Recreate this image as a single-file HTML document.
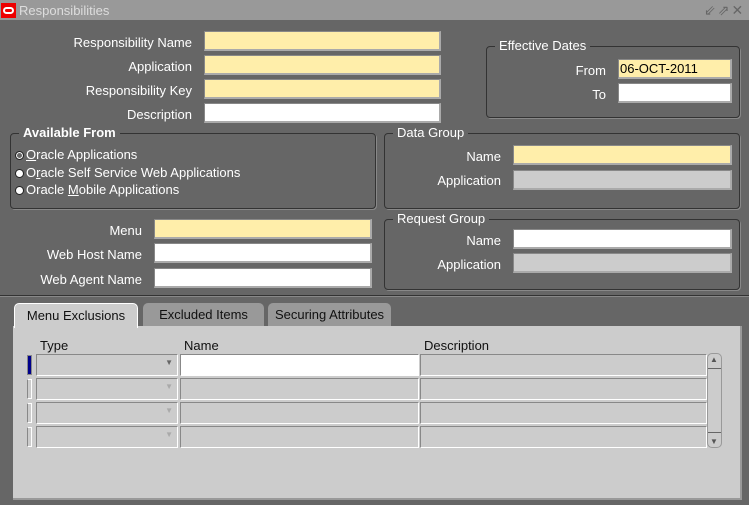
<!DOCTYPE html>
<html><head><meta charset="utf-8"><style>
*{margin:0;padding:0;box-sizing:border-box}
body{width:749px;height:505px;background:#666;font-family:"Liberation Sans",sans-serif;font-size:13px;color:#fff;position:relative;overflow:hidden}
.a{position:absolute}
.in{position:absolute;height:20px;border-top:1px solid #888;border-left:1px solid #888;border-right:2px solid #aaa;border-bottom:2px solid #aaa}
.y{background:#ffeeaa}.w{background:#fff}.g{background:#ccc}
.lb{position:absolute;text-align:right;width:180px}
.box{position:absolute;border:1px solid #333;border-radius:4px;box-shadow:1px 1px 0 #888}
.bt{position:absolute;background:#666;padding:0 4px;top:-9px}
.rd{display:inline-block;width:9px;height:9px;border-radius:50%;background:#fff;border:1px solid #222;margin-right:2px;vertical-align:-1px}
.tab{position:absolute;top:303px;height:23px;background:#999;border-radius:5px 5px 0 0;color:#111;text-align:center;line-height:24px;font-size:13px}
.c{position:absolute;height:22px;border:1px solid #888;border-right-color:#fff;border-bottom-color:#fff;background:#ccc}
</style></head><body>
<div class="a" style="left:0;top:0;width:749px;height:20px;background:#999"></div>
<div class="a" style="left:1px;top:3px;width:15px;height:15px;background:#e00"><div style="margin:4px 2px;width:11px;height:7px;border:2px solid #fff;border-radius:4px"></div></div>
<div class="a" style="left:19px;top:3px;color:#ddd">Responsibilities</div>
<div class="a" style="left:704px;top:2px;color:#666;font-size:14px;letter-spacing:2px">⇙⇗✕</div>

<div class="lb" style="left:12px;top:35px">Responsibility Name</div><div class="in y" style="left:204px;top:31px;width:237px"></div>
<div class="lb" style="left:12px;top:59px">Application</div><div class="in y" style="left:204px;top:55px;width:237px"></div>
<div class="lb" style="left:12px;top:83px">Responsibility Key</div><div class="in y" style="left:204px;top:79px;width:237px"></div>
<div class="lb" style="left:12px;top:107px">Description</div><div class="in w" style="left:204px;top:103px;width:237px"></div>

<div class="box" style="left:486px;top:46px;width:254px;height:72px"><div class="bt" style="left:8px">Effective Dates</div></div>
<div class="lb" style="left:426px;top:63px">From</div><div class="in y" style="left:618px;top:59px;width:114px;color:#000;padding-left:1px;line-height:18px">06-OCT-2011</div>
<div class="lb" style="left:426px;top:87px">To</div><div class="in w" style="left:618px;top:83px;width:114px"></div>

<div class="box" style="left:10px;top:133px;width:366px;height:76px"><div class="bt" style="left:8px;font-weight:bold;font-size:13px">Available From</div></div>
<div class="a" style="left:15px;top:147px"><span class="rd" style="background:#666;box-shadow:inset 0 0 0 1px #fff"></span><u>O</u>racle Applications</div>
<div class="a" style="left:15px;top:165px"><span class="rd"></span>O<u>r</u>acle Self Service Web Applications</div>
<div class="a" style="left:15px;top:182px"><span class="rd"></span>Oracle <u>M</u>obile Applications</div>

<div class="box" style="left:384px;top:133px;width:356px;height:76px"><div class="bt" style="left:8px">Data Group</div></div>
<div class="lb" style="left:321px;top:149px">Name</div><div class="in y" style="left:513px;top:145px;width:219px"></div>
<div class="lb" style="left:321px;top:173px">Application</div><div class="in g" style="left:513px;top:170px;width:219px"></div>

<div class="lb" style="left:-38px;top:223px">Menu</div><div class="in y" style="left:154px;top:219px;width:218px"></div>
<div class="lb" style="left:-38px;top:247px">Web Host Name</div><div class="in w" style="left:154px;top:243px;width:218px"></div>
<div class="lb" style="left:-38px;top:272px">Web Agent Name</div><div class="in w" style="left:154px;top:268px;width:218px"></div>

<div class="box" style="left:384px;top:219px;width:356px;height:71px"><div class="bt" style="left:8px">Request Group</div></div>
<div class="lb" style="left:321px;top:233px">Name</div><div class="in w" style="left:513px;top:229px;width:219px"></div>
<div class="lb" style="left:321px;top:257px">Application</div><div class="in g" style="left:513px;top:253px;width:219px"></div>

<div class="a" style="left:0;top:295px;width:749px;height:1px;background:#333"></div>
<div class="a" style="left:0;top:296px;width:749px;height:1px;background:#888"></div>

<div class="a" style="left:13px;top:326px;width:729px;height:174px;background:#ccc;border-right:2px solid #999;border-bottom:2px solid #999"></div>
<div class="tab" style="left:14px;width:124px;height:25px;background:#ccc;border:1px solid #fff;border-bottom:none">Menu Exclusions</div>
<div class="tab" style="left:143px;width:121px">Excluded Items</div>
<div class="tab" style="left:268px;width:123px">Securing Attributes</div>

<div class="a" style="left:40px;top:338px;color:#111">Type</div>
<div class="a" style="left:184px;top:338px;color:#111">Name</div>
<div class="a" style="left:424px;top:338px;color:#111">Description</div>

<div class="a" style="left:27px;top:355px;width:5px;height:20px;background:#00008b;border:1px solid #888"></div>
<div class="a" style="left:27px;top:379px;width:5px;height:20px;border:1px solid #fff;border-left-color:#888"></div>
<div class="a" style="left:27px;top:403px;width:5px;height:20px;border:1px solid #fff;border-left-color:#888"></div>
<div class="a" style="left:27px;top:427px;width:5px;height:20px;border:1px solid #fff;border-left-color:#888"></div>

<div class="c" style="left:36px;top:354px;width:142px"><span style="position:absolute;right:4px;top:3px;color:#666;font-size:8px">▼</span></div>
<div class="c" style="left:180px;top:354px;width:239px;background:#fff"></div>
<div class="c" style="left:420px;top:354px;width:287px"></div>
<div class="c" style="left:36px;top:378px;width:142px"><span style="position:absolute;right:4px;top:3px;color:#aaa;font-size:8px">▼</span></div>
<div class="c" style="left:180px;top:378px;width:239px"></div>
<div class="c" style="left:420px;top:378px;width:287px"></div>
<div class="c" style="left:36px;top:402px;width:142px"><span style="position:absolute;right:4px;top:3px;color:#aaa;font-size:8px">▼</span></div>
<div class="c" style="left:180px;top:402px;width:239px"></div>
<div class="c" style="left:420px;top:402px;width:287px"></div>
<div class="c" style="left:36px;top:426px;width:142px"><span style="position:absolute;right:4px;top:3px;color:#aaa;font-size:8px">▼</span></div>
<div class="c" style="left:180px;top:426px;width:239px"></div>
<div class="c" style="left:420px;top:426px;width:287px"></div>

<div class="a" style="left:707px;top:353px;width:15px;height:95px;border:1px solid #999;border-radius:5px;background:#ccc">
<div style="position:absolute;top:1px;left:2px;color:#555;font-size:8px">▲</div>
<div style="position:absolute;top:14px;left:0;width:13px;height:1px;background:#666"></div>
<div style="position:absolute;bottom:14px;left:0;width:13px;height:1px;background:#666"></div>
<div style="position:absolute;bottom:1px;left:2px;color:#555;font-size:8px">▼</div>
</div>
</body></html>
